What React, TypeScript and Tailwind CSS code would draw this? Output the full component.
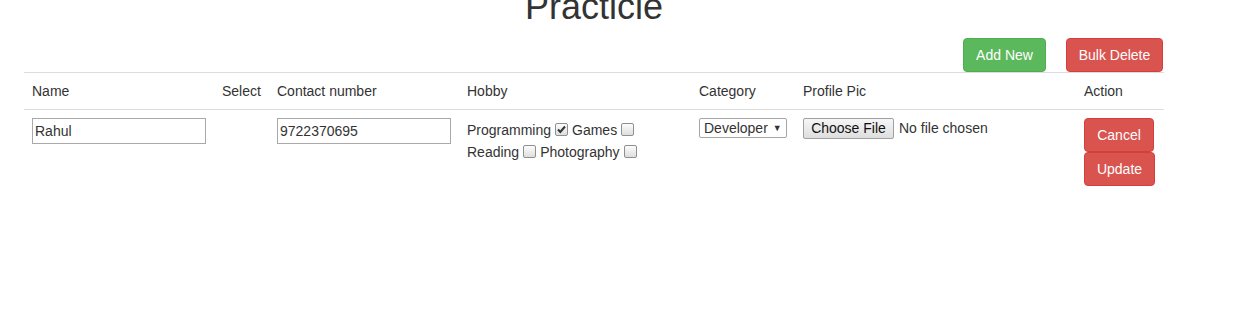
import React from "react";

const font = { fontFamily: '"Liberation Sans", Arial, Helvetica, sans-serif' };

function Check({ checked }: { checked?: boolean }) {
  return (
    <span className="inline-block align-[-1px] mx-[4px] w-[13px] h-[13px] rounded-[2px] border border-[#8f8f8f] bg-gradient-to-b from-[#fcfcfc] to-[#dedede] relative">
      {checked && (
        <svg viewBox="0 0 13 13" className="absolute left-[-1px] top-[-1px] w-[13px] h-[13px]">
          <path d="M3 6.5 L5.3 9 L10 3.5" fill="none" stroke="#333" strokeWidth="2" />
        </svg>
      )}
    </span>
  );
}

function Btn({ children, kind, className = "" }: { children: React.ReactNode; kind: "success" | "danger"; className?: string }) {
  const c =
    kind === "success"
      ? "bg-[#5cb85c] border-[#4cae4c]"
      : "bg-[#d9534f] border-[#d43f3a]";
  return (
    <button className={`h-[34px] px-0 border rounded-[4px] text-white text-[14px] leading-[20px] ${c} ${className}`}>
      {children}
    </button>
  );
}

export default function App() {
  return (
    <div className="w-[1236px] h-[331px] bg-white overflow-hidden text-[#333] text-[14px] leading-[20px]" style={font}>
      <div className="ml-[24px] w-[1140px]">
        <h1 className="mt-[-13px] text-center text-[36px] leading-[39.6px] font-normal">Practicle</h1>
        <div className="flex justify-end gap-[20px] mt-[11px] pr-[1px] h-[34px]">
          <Btn kind="success" className="w-[83px]">Add New</Btn>
          <Btn kind="danger" className="w-[97px]">Bulk Delete</Btn>
        </div>
        <div className="border-t border-[#ddd]">
          <div className="grid grid-cols-[190px_55px_190px_232px_104px_281px_88px] border-b border-[#ddd]">
            {["Name", "Select", "Contact number", "Hobby", "Category", "Profile Pic", "Action"].map((h) => (
              <div key={h} className="p-[8px]">{h}</div>
            ))}
          </div>
          <div className="grid grid-cols-[190px_55px_190px_232px_104px_281px_88px]">
            <div className="p-[8px]">
              <div className="w-[174px] h-[26px] border border-[#a9a9a9] px-[2px] leading-[24px]">Rahul</div>
            </div>
            <div className="p-[8px]"></div>
            <div className="p-[8px]">
              <div className="w-[174px] h-[26px] border border-[#a9a9a9] px-[2px] leading-[24px]">9722370695</div>
            </div>
            <div className="px-[8px] pt-[9px] leading-[22px]">
              <div>
                Programming<Check checked />Games<Check />
              </div>
              <div>
                Reading<Check />Photography<Check />
              </div>
            </div>
            <div className="p-[8px]">
              <div className="inline-flex items-center h-[20px] w-[88px] border border-[#a6a6a6] rounded-[2px] pl-[4px] leading-[18px]">
                Developer<span className="ml-[5px] text-[9px]">▼</span>
              </div>
            </div>
            <div className="p-[8px] flex items-start">
              <div className="h-[21px] w-[91px] border border-[#a0a0a0] rounded-[2px] bg-gradient-to-b from-[#f6f6f6] to-[#dedede] text-center leading-[19px] text-[#111]">
                Choose File
              </div>
              <span className="ml-[5px] leading-[20px]">No file chosen</span>
            </div>
            <div className="p-[8px] flex flex-col items-start">
              <Btn kind="danger" className="w-[70px]">Cancel</Btn>
              <Btn kind="danger" className="w-[71px]">Update</Btn>
            </div>
          </div>
        </div>
      </div>
    </div>
  );
}
